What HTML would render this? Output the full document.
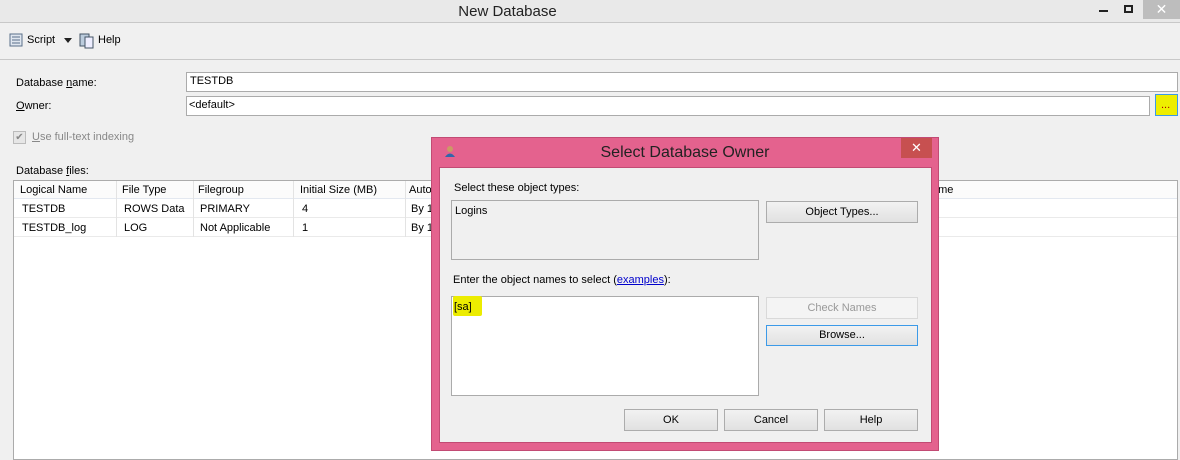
<!DOCTYPE html>
<html><head><style>
*{margin:0;padding:0;box-sizing:border-box}
body{width:1180px;height:454px;background:#f0f0f0;font-family:"Liberation Sans",sans-serif;font-size:11px;color:#000;position:relative;overflow:hidden}
.a{position:absolute}
.box{position:absolute;background:#fff;border:1px solid #ababab}
.btn{position:absolute;background:linear-gradient(#f2f2f2,#e1e1e1);border:1px solid #acacac;text-align:center;font-size:11px}
.t{position:absolute;white-space:nowrap}
.cell{position:absolute;white-space:nowrap}
</style></head><body>
<div class="a" style="left:0;top:0;width:1180px;height:23px;background:#e9e9e9;border-bottom:1px solid #c8c8c8"></div>
<div class="t" style="left:0;width:1015px;top:3px;text-align:center;font-size:15px;color:#222">New Database</div>
<div class="a" style="left:1099px;top:10px;width:9px;height:2px;background:#222"></div>
<div class="a" style="left:1124px;top:5px;width:9px;height:8px;border:2px solid #222"></div>
<div class="a" style="left:1143px;top:0;width:37px;height:19px;background:#bdbdbd;color:#fff;text-align:center;font-size:14px;line-height:19px">✕</div>
<div class="a" style="left:0;top:59px;width:1180px;height:1px;background:#c8c8c8"></div>
<svg class="a" style="left:7px;top:32px" width="20" height="18"><path d="M3 2h12v12H3z" fill="#dfe6ef" stroke="#5a6f8a"/><path d="M5 5h8M5 8h8M5 11h8" stroke="#5a6f8a"/></svg>
<div class="t" style="left:27px;top:34px">Script</div>
<div class="a" style="left:64px;top:38px;border:4px solid transparent;border-top:5px solid #222"></div>
<svg class="a" style="left:78px;top:32px" width="18" height="18"><rect x="2" y="2" width="9" height="12" fill="#bcd" stroke="#456"/><rect x="7" y="5" width="8" height="11" fill="#eef" stroke="#456"/></svg>
<div class="t" style="left:98px;top:34px">Help</div>
<div class="t" style="left:16px;top:77px">Database <u>n</u>ame:</div>
<div class="t" style="left:16px;top:100px"><u>O</u>wner:</div>
<div class="box" style="left:186px;top:72px;width:992px;height:20px"></div>
<div class="t" style="left:190px;top:75px">TESTDB</div>
<div class="box" style="left:186px;top:96px;width:964px;height:20px"></div>
<div class="t" style="left:189px;top:99px">&lt;default&gt;</div>
<div class="a" style="left:1155px;top:94px;width:23px;height:22px;background:#eeee00;border:1px solid #3c9ae8"></div>
<div class="t" style="left:1161px;top:99px;color:#a00">...</div>
<div class="a" style="left:13px;top:131px;width:13px;height:13px;border:1px solid #bbb;background:#e6e6e6;color:#888;font-size:10px;line-height:11px;text-align:center">✔</div>
<div class="t" style="left:32px;top:131px;color:#888"><u>U</u>se full-text indexing</div>
<div class="t" style="left:16px;top:165px">Database <u>f</u>iles:</div>
<div class="box" style="left:13px;top:180px;width:1165px;height:280px"></div>
<div class="a" style="left:14px;top:181px;width:1163px;height:18px;background:#fbfbfb;border-bottom:1px solid #e3e8f0"></div>
<div class="a" style="left:14px;top:217px;width:1163px;height:1px;background:#eaeaea"></div>
<div class="a" style="left:14px;top:236px;width:1163px;height:1px;background:#eaeaea"></div>
<div class="a" style="left:116px;top:181px;width:1px;height:56px;background:#e3e3e3"></div>
<div class="a" style="left:193px;top:181px;width:1px;height:56px;background:#e3e3e3"></div>
<div class="a" style="left:293px;top:181px;width:1px;height:56px;background:#e3e3e3"></div>
<div class="a" style="left:405px;top:181px;width:1px;height:56px;background:#e3e3e3"></div>
<div class="cell" style="left:20px;top:184px">Logical Name</div>
<div class="cell" style="left:122px;top:184px">File Type</div>
<div class="cell" style="left:198px;top:184px">Filegroup</div>
<div class="cell" style="left:300px;top:184px">Initial Size (MB)</div>
<div class="cell" style="left:409px;top:184px">Auto</div>
<div class="cell" style="left:932px;top:184px">ame</div>
<div class="cell" style="left:22px;top:203px">TESTDB</div>
<div class="cell" style="left:124px;top:203px">ROWS Data</div>
<div class="cell" style="left:200px;top:203px">PRIMARY</div>
<div class="cell" style="left:302px;top:203px">4</div>
<div class="cell" style="left:411px;top:203px">By 1</div>
<div class="cell" style="left:22px;top:222px">TESTDB_log</div>
<div class="cell" style="left:124px;top:222px">LOG</div>
<div class="cell" style="left:200px;top:222px">Not Applicable</div>
<div class="cell" style="left:302px;top:222px">1</div>
<div class="cell" style="left:411px;top:222px">By 1</div>

<div class="a" style="left:431px;top:137px;width:508px;height:314px;background:#e4628e;border:1px solid #c24b74"></div>
<div class="a" style="left:901px;top:138px;width:31px;height:20px;background:#c75050;color:#fff;text-align:center;font-size:13px;line-height:20px">✕</div>
<svg class="a" style="left:443px;top:144px" width="14" height="14"><circle cx="7" cy="5" r="3" fill="#c96"/><path d="M2 13q5-7 10 0z" fill="#36a"/></svg>
<div class="t" style="left:431px;width:508px;top:144px;text-align:center;font-size:16px;color:#222">Select Database Owner</div>
<div class="a" style="left:439px;top:167px;width:493px;height:276px;background:#f0f0f0;border:1px solid #c24b74"></div>
<div class="t" style="left:454px;top:182px">Select these object types:</div>
<div class="a" style="left:451px;top:200px;width:308px;height:60px;border:1px solid #ababab;background:#f0f0f0"></div>
<div class="t" style="left:455px;top:205px">Logins</div>
<div class="btn" style="left:766px;top:201px;width:152px;height:22px;line-height:20px">Object Types...</div>
<div class="t" style="left:453px;top:274px">Enter the object names to select (<span style="color:#00c;text-decoration:underline">examples</span>):</div>
<div class="box" style="left:451px;top:296px;width:308px;height:100px"></div>
<div class="a" style="left:453px;top:296px;width:29px;height:20px;background:#ecec00;border-radius:2px"></div>
<div class="t" style="left:454px;top:301px">[sa]</div>
<div class="btn" style="left:766px;top:297px;width:152px;height:22px;line-height:20px;color:#999;background:#f4f4f4;border-color:#d9d9d9">Check Names</div>
<div class="btn" style="left:766px;top:325px;width:152px;height:21px;line-height:19px;border-color:#3c9ae8">Browse...</div>
<div class="btn" style="left:624px;top:409px;width:94px;height:22px;line-height:20px">OK</div>
<div class="btn" style="left:724px;top:409px;width:94px;height:22px;line-height:20px">Cancel</div>
<div class="btn" style="left:824px;top:409px;width:94px;height:22px;line-height:20px">Help</div>
</body></html>
